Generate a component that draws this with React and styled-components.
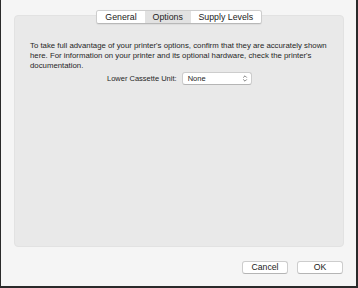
import React from "react";
import styled, { createGlobalStyle } from "styled-components";

const Global = createGlobalStyle`
  html, body {
    margin: 0;
    padding: 0;
    background: #ffffff;
  }
  body {
    font-family: "Liberation Sans", Arial, sans-serif;
    color: #262626;
  }
`;

const Window = styled.div`
  width: 358px;
  height: 288px;
  box-sizing: border-box;
  background: #f5f5f5;
  border-left: 1px solid #2a2a2a;
  border-right: 2px solid #2a2a2a;
  border-bottom: 2px solid #2a2a2a;
  display: flex;
  flex-direction: column;
  padding: 15px 12px 0 13px;
`;

const Pane = styled.div`
  position: relative;
  height: 232px;
  background: #e9e9e9;
  border: 1px solid #e2e2e2;
  border-radius: 4px;
  box-sizing: border-box;
  padding: 25px 10px 0 15px;
`;

const TabBar = styled.div`
  position: absolute;
  top: -6px;
  left: 0;
  right: 0;
  display: flex;
  justify-content: center;
`;

const Segments = styled.div`
  display: flex;
  background: #ffffff;
  border: 1px solid #cdcdcd;
  border-bottom-color: #b8b8b8;
  border-radius: 3px;
  overflow: hidden;
  box-shadow: 0 0.5px 1px rgba(0, 0, 0, 0.06);
`;

const Segment = styled.div`
  height: 12px;
  line-height: 12px;
  padding: 0 ${({ $pad }) => $pad}px;
  font-size: 8.8px;
  color: #222;
  background: ${({ $active }) => ($active ? "#e2e2e2" : "#ffffff")};
`;

const Intro = styled.p`
  margin: 0;
  font-size: 7.8px;
  line-height: 9.8px;
  white-space: nowrap;
  color: #262626;
`;

const Row = styled.div`
  display: flex;
  align-items: center;
  margin-top: 2px;
  padding-left: 77px;
`;

const Label = styled.span`
  font-size: 7.5px;
  margin-right: 5px;
`;

const Select = styled.div`
  width: 70px;
  height: 13px;
  box-sizing: border-box;
  background: #fff;
  border: 1px solid #cdcdcd;
  border-bottom-color: #b5b5b5;
  border-radius: 3px;
  display: flex;
  align-items: center;
  justify-content: space-between;
  padding: 0 3px 0 5px;
  font-size: 7.5px;
`;

const Footer = styled.div`
  display: flex;
  justify-content: flex-end;
  gap: 9px;
  margin-top: 14px;
  padding-right: 1px;
`;

const Button = styled.div`
  width: 46px;
  height: 13px;
  box-sizing: border-box;
  background: #fff;
  border: 1px solid #cdcdcd;
  border-bottom-color: #b5b5b5;
  border-radius: 3px;
  font-size: 8.7px;
  line-height: 11px;
  text-align: center;
  color: #222;
`;

const Stepper = () => (
  <svg width="6" height="9" viewBox="0 0 6 9">
    <path d="M1.2 3.6 L3 1.8 L4.8 3.6 M1.2 5.4 L3 7.2 L4.8 5.4" fill="none" stroke="#666" strokeWidth="0.8" />
  </svg>
);

export default function App() {
  return (
    <>
      <Global />
      <Window>
        <Pane>
          <TabBar>
            <Segments>
              <Segment $pad={8}>General</Segment>
              <Segment $pad={8} $active>Options</Segment>
              <Segment $pad={7.5}>Supply Levels</Segment>
            </Segments>
          </TabBar>
          <Intro>
            To take full advantage of your printer's options, confirm that they are accurately shown
            <br />
            here. For information on your printer and its optional hardware, check the printer's
            <br />
            documentation.
          </Intro>
          <Row>
            <Label>Lower Cassette Unit:</Label>
            <Select>
              None
              <Stepper />
            </Select>
          </Row>
        </Pane>
        <Footer>
          <Button>Cancel</Button>
          <Button>OK</Button>
        </Footer>
      </Window>
    </>
  );
}
